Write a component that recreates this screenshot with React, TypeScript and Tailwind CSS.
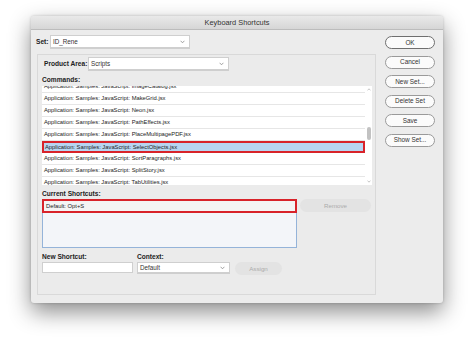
import React from "react";

const font = { fontFamily: '"Liberation Sans", Arial, sans-serif' };

const commands = [
  "Application: Samples: JavaScript: ImageCatalog.jsx",
  "Application: Samples: JavaScript: MakeGrid.jsx",
  "Application: Samples: JavaScript: Neon.jsx",
  "Application: Samples: JavaScript: PathEffects.jsx",
  "Application: Samples: JavaScript: PlaceMultipagePDF.jsx",
  "Application: Samples: JavaScript: SelectObjects.jsx",
  "Application: Samples: JavaScript: SortParagraphs.jsx",
  "Application: Samples: JavaScript: SplitStory.jsx",
  "Application: Samples: JavaScript: TabUtilities.jsx",
];

function Chevron() {
  return (
    <svg width="5" height="4" viewBox="0 0 5 4" className="shrink-0">
      <path d="M0.6 0.8 L2.5 2.8 L4.4 0.8" fill="none" stroke="#8a8a8a" strokeWidth="0.8" />
    </svg>
  );
}

function Select({ value, className }: { value: string; className: string }) {
  return (
    <div
      className={`flex items-center justify-between bg-white border border-[#cfcfcf] pl-[2px] pr-[4px] text-[6.3px] text-[#333] shadow-[0_0.5px_0.5px_rgba(0,0,0,0.12)] ${className}`}
    >
      <span>{value}</span>
      <Chevron />
    </div>
  );
}

function PillButton({ label, primary }: { label: string; primary?: boolean }) {
  return (
    <div
      className={`h-[13px] w-[50px] flex items-center justify-center rounded-full bg-[#fbfbfb] text-[6.4px] text-[#333] border ${
        primary ? "border-[#6f6f6f]" : "border-[#9a9a9a]"
      }`}
    >
      {label}
    </div>
  );
}

export default function App() {
  return (
    <div className="w-[474px] h-[348px] bg-white overflow-hidden" style={font}>
      <div className="ml-[31px] mt-[16px] w-[412px] h-[287px] bg-[#ececec] rounded-[3px] flex flex-col shadow-[0_9px_22px_rgba(0,0,0,0.45),0_0_3px_rgba(0,0,0,0.2)]">
        {/* Title bar */}
        <div className="h-[14px] shrink-0 flex items-center justify-center rounded-t-[3px] bg-gradient-to-b from-[#e9e9e9] to-[#d6d6d6] border-b border-[#bcbcbc] text-[7.4px] text-[#333]">
          Keyboard Shortcuts
        </div>
        {/* Body */}
        <div className="flex flex-1">
          {/* Left column */}
          <div className="w-[347px] pl-[5px] pt-[5px]">
            <div className="flex items-center h-[13px]">
              <span className="w-[14px] text-[6.6px] font-bold text-[#222]">Set:</span>
              <Select value="ID_Rene" className="w-[140px] h-[13px]" />
            </div>
            {/* Group */}
            <div className="mt-[6px] ml-[1px] w-[339px] h-[241px] border border-[#d9d9d9] bg-[#ebebeb] pl-[4px]">
              <div className="mt-[2px] flex items-center h-[13px] pl-[2px]">
                <span className="w-[44px] text-[6.6px] font-bold text-[#222]">Product Area:</span>
                <Select value="Scripts" className="w-[141px] h-[13px]" />
              </div>
              <div className="mt-[6px] h-[8px] flex items-center text-[6.6px] font-bold text-[#222]">
                Commands:
              </div>
              {/* Commands list */}
              <div className="mt-[2px] w-[330px] h-[99px] flex bg-white overflow-hidden">
                <div className="w-[323px] h-[99px] overflow-hidden">
                  <div className="-mt-[5px] flex flex-col">
                    {commands.map((c) => {
                      const sel = c.endsWith("SelectObjects.jsx");
                      return (
                        <div
                          key={c}
                          className={`h-[12px] flex items-center text-[5.8px] text-[#222] ${
                            sel
                              ? "bg-[#b7d5f1] border-2 border-[#d8232a] pl-[1px]"
                              : "border-b border-[#e6e6e6] pl-[2px]"
                          }`}
                        >
                          {c}
                        </div>
                      );
                    })}
                  </div>
                </div>
                {/* scrollbar */}
                <div className="w-[7px] h-[99px] flex flex-col items-center justify-between py-[2px]">
                  <svg width="4" height="3" viewBox="0 0 4 3">
                    <path d="M0.5 2.4 L2 0.8 L3.5 2.4" fill="none" stroke="#a0a0a0" strokeWidth="0.6" />
                  </svg>
                  <div className="w-[4px] h-[13px] rounded-full bg-[#c2c2c2] mt-[36px]" />
                  <div className="flex-1" />
                  <svg width="4" height="3" viewBox="0 0 4 3">
                    <path d="M0.5 0.6 L2 2.2 L3.5 0.6" fill="none" stroke="#a0a0a0" strokeWidth="0.6" />
                  </svg>
                </div>
              </div>
              <div className="mt-[5px] h-[8px] flex items-center text-[6.6px] font-bold text-[#222]">
                Current Shortcuts:
              </div>
              <div className="mt-[1px] flex items-start">
                <div className="w-[255px] h-[49px] bg-[#f3f5f9] border border-[#94b3d9]">
                  <div className="h-[14px] -mt-[1px] -ml-[1px] w-[255px] border-2 border-[#d8232a] bg-[#f4f4f4] flex items-center pl-[2px] text-[5.8px] text-[#222]">
                    Default: Opt+S
                  </div>
                </div>
                <div className="ml-[3px] w-[71px] h-[13px] rounded-full bg-[#e3e3e3] flex items-center justify-center text-[6.2px] text-[#ababab]">
                  Remove
                </div>
              </div>
              <div className="mt-[5px] flex h-[8px] items-center text-[6.6px] font-bold text-[#222]">
                <span className="w-[95px]">New Shortcut:</span>
                <span>Context:</span>
              </div>
              <div className="mt-[1px] flex items-start">
                <div className="w-[91px] h-[11px] bg-white border border-[#cfcfcf]" />
                <Select value="Default" className="ml-[4px] w-[93px] h-[11px]" />
                <div className="ml-[5px] w-[47px] h-[13px] rounded-full bg-[#e3e3e3] flex items-center justify-center text-[6.2px] text-[#ababab]">
                  Assign
                </div>
              </div>
            </div>
          </div>
          {/* Right buttons */}
          <div className="ml-[7px] pt-[6px] flex flex-col gap-[6.5px]">
            <PillButton label="OK" primary />
            <PillButton label="Cancel" />
            <PillButton label="New Set..." />
            <PillButton label="Delete Set" />
            <PillButton label="Save" />
            <PillButton label="Show Set..." />
          </div>
        </div>
      </div>
    </div>
  );
}
